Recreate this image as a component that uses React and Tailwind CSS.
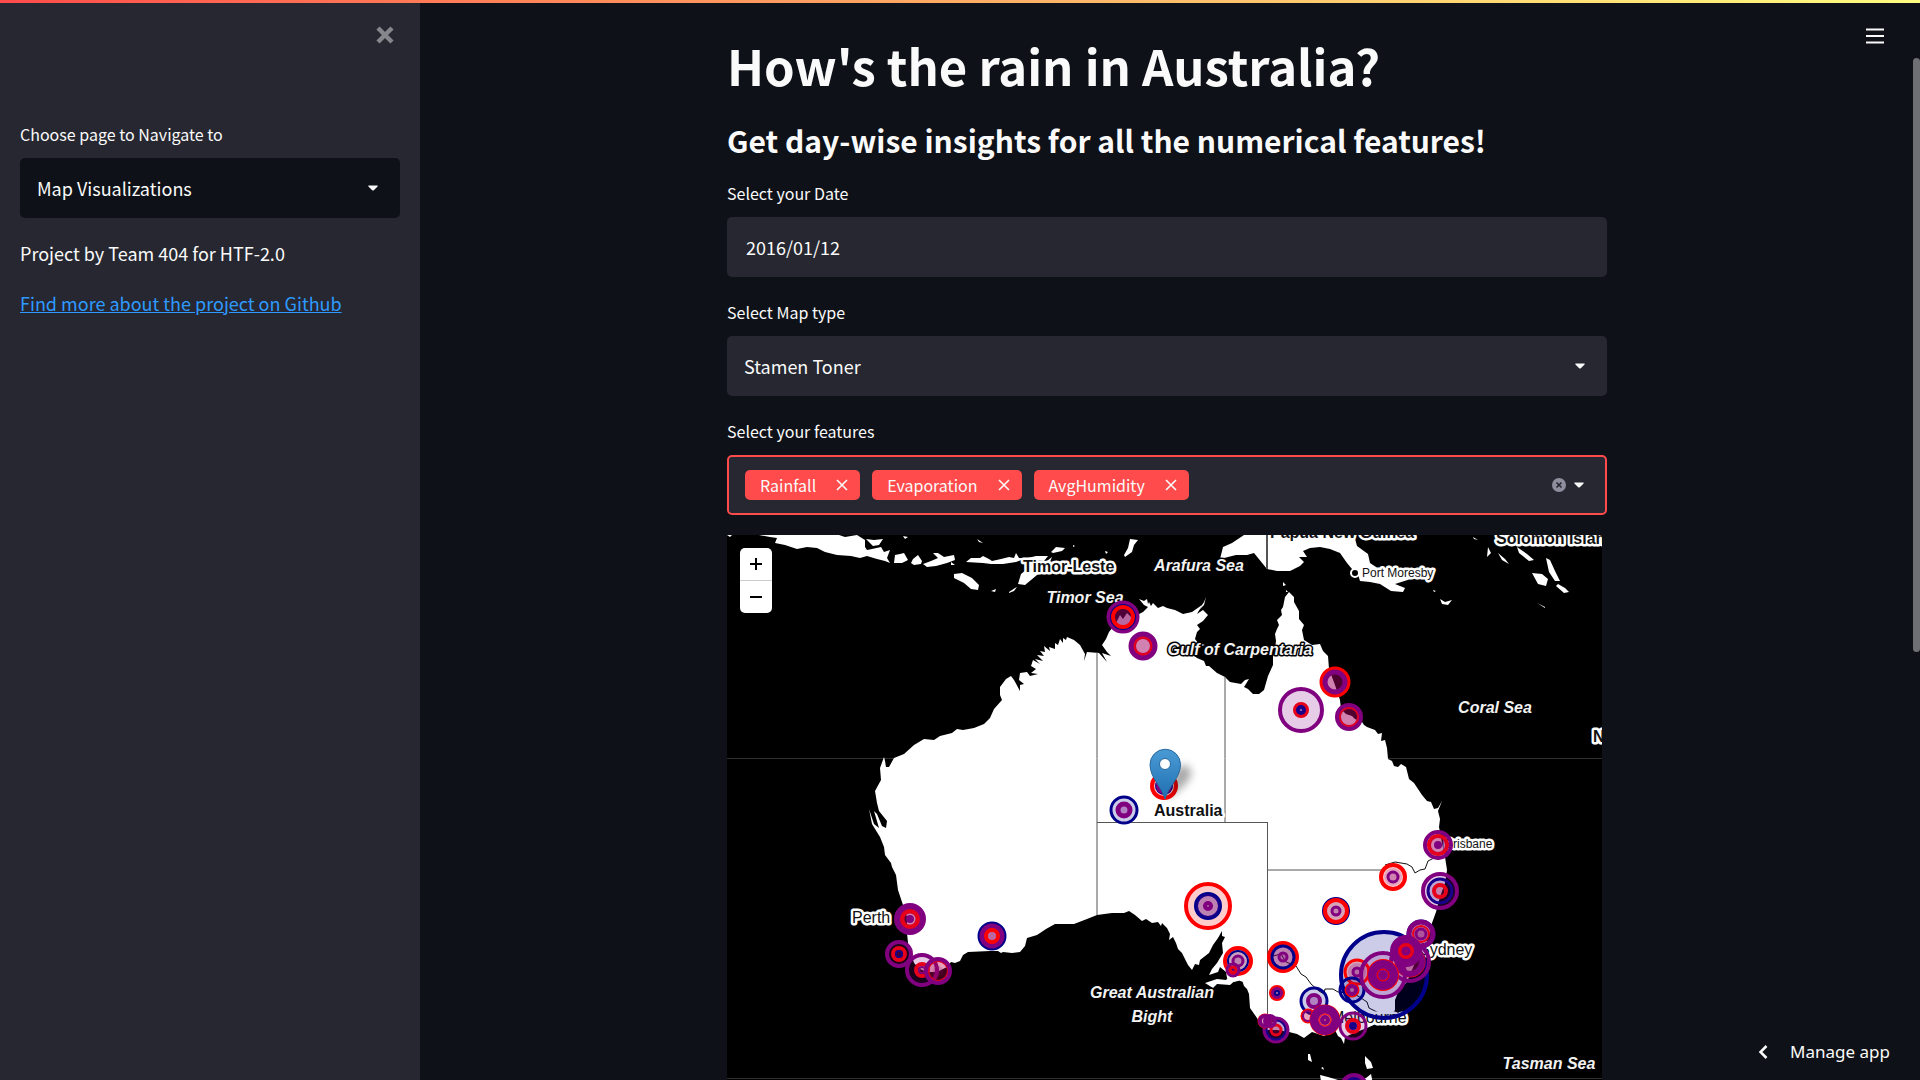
import { useState } from "react";

const PAGES = ["Map Visualizations", "Home", "Predictions"];
const MAP_TYPES = ["Stamen Toner", "Stamen Terrain", "OpenStreetMap"];

const COLORS = { n: "#00008b", r: "#ff0000", p: "#800080" };

// [x, y, [color, radius, strokeWidth?], ...]
const STATIONS = [
  [396, 82, ["p", 14, 5], ["n", 12, 2], ["r", 10], ["p", 8, 0]],
  [416, 111, ["r", 9], ["p", 12, 5], ["p", 8, 0]],
  [608, 147, ["r", 13, 5], ["p", 10, 5], ["p", 8, 0]],
  [574, 175, ["r", 6], ["n", 3], ["p", 21]],
  [622, 182, ["r", 10], ["p", 12], ["p", 9, 0]],
  [437, 251, ["r", 12], ["n", 7], ["p", 6]],
  [397, 275, ["n", 13, 3], ["p", 6, 5], ["p", 6, 0]],
  [183, 384, ["r", 8, 5], ["p", 13, 6], ["p", 2], ["p", 6, 0]],
  [172, 419, ["r", 6], ["n", 3, 2], ["p", 12]],
  [195, 435, ["r", 6], ["p", 3, 2], ["p", 15]],
  [211, 436, ["r", 10, 2], ["p", 5, 0], ["p", 12]],
  [265, 401, ["n", 13, 3], ["p", 10, 5], ["r", 6], ["p", 4, 0]],
  [481, 371, ["r", 22], ["n", 12], ["p", 12, 0], ["p", 3]],
  [511, 426, ["r", 13], ["n", 10, 2], ["p", 5, 3]],
  [506, 435, ["r", 3, 3], ["p", 6, 3]],
  [556, 422, ["r", 14], ["n", 11, 3], ["p", 10, 0], ["p", 4, 3]],
  [550, 458, ["r", 6], ["p", 4], ["n", 2, 2]],
  [609, 376, ["n", 13, 2], ["r", 11], ["p", 4, 3]],
  [666, 342, ["r", 12], ["p", 5, 3], ["p", 9, 0]],
  [711, 310, ["r", 9], ["p", 13], ["p", 2], ["p", 8, 0]],
  [713, 356, ["n", 12, 3], ["r", 6], ["p", 17]],
  [657, 440, ["n", 43]],
  [630, 437, ["r", 12, 3], ["p", 4, 3], ["p", 9, 0]],
  [625, 455, ["n", 12, 3], ["r", 6, 3], ["p", 4]],
  [694, 399, ["n", 13, 3], ["p", 12, 5], ["r", 8, 2], ["p", 5, 3], ["p", 9, 0]],
  [683, 427, ["p", 19], ["r", 14, 3], ["p", 12, 6]],
  [679, 416, ["p", 13, 6], ["p", 9, 4], ["r", 7, 0], ["r", 6, 4], ["p", 9, 0], ["p", 3, 3]],
  [656, 440, ["p", 22], ["r", 15, 2], ["p", 12, 6], ["p", 7, 6], ["r", 6, 1], ["p", 2]],
  [587, 466, ["n", 13, 3], ["p", 6], ["p", 4, 0]],
  [581, 481, ["r", 6, 3], ["p", 5, 2]],
  [598, 485, ["r", 14, 3], ["p", 12, 6], ["p", 8, 3], ["r", 6, 1], ["p", 3]],
  [626, 491, ["r", 6], ["n", 2], ["p", 13, 3]],
  [549, 495, ["n", 10, 3], ["r", 5, 3], ["p", 12, 3]],
  [538, 486, ["r", 6, 3], ["p", 5]],
  [543, 486, ["p", 5, 4]],
  [627, 552, ["n", 9], ["p", 12]],
];

const AUSTRALIA =
  "M360 117L357 126 358 119 353 110 347 105 340 102 339 105 336 103 336 108 333 104 331 110 328 108 328 114 322 112 323 116 317 111 318 117 313 116 317 121 310 120 316 126 308 124 313 129 306 125 304 131 309 134 304 138 311 139 303 141 300 137 293 138 292 145 297 149 293 150 293 156 287 145 284 141 279 144 273 152 273 160 275 165 267 174 263 183 257 189 247 193 236 195 230 194 225 198 213 201 207 205 197 204 187 210 177 219 167 223 162 232 159 232 158 226 157 222 153 233 154 245 148 256 150 268 152 276 160 286 159 293 155 291 150 279 147 276 152 293 147 289 142 274 145 289 153 302 157 312 158 320 164 328 165 332 169 340 171 355 175 367 180 382 180 398 181 408 184 418 187 428 193 434 200 437 210 437 220 432 224 427 228 428 233 426 236 420 241 417 263 416 271 416 274 418 276 417 285 418 293 417 298 411 300 403 310 400 319 394 328 389 347 389 360 384 370 380 385 378 397 378 402 376 408 380 415 386 419 384 425 388 431 387 434 391 435 388 440 393 443 399 442 405 446 402 449 408 451 414 455 418 461 430 465 435 468 429 472 430 473 425 482 418 486 410 491 403 495 396 495 401 498 402 495 408 496 418 490 428 485 434 482 440 491 437 493 432 499 437 500 443 507 447 515 445 517 451 520 454 522 459 523 473 530 483 537 495 550 495 562 497 570 499 577 503 585 497 597 501 608 495 611 501 614 503 617 509 618 502 627 498 640 493 653 487 663 482 668 475 668 465 672 455 680 447 685 435 692 418 703 398 705 388 709 377 713 362 718 348 720 335 718 322 715 308 712 292 713 284 711 276 715 266 711 273 707 274 704 267 700 266 695 260 687 248 682 244 680 236 679 232 674 229 671 232 667 231 665 226 661 224 660 213 658 205 654 206 655 198 651 199 648 195 640 192 637 190 635 187 628 184 625 181 619 179 614 174 613 165 608 150 602 134 601 121 596 116 593 109 585 110 577 105 575 95 577 90 572 84 572 76 567 67 567 62 562 57 558 62 556 72 554 75 555 80 550 85 552 90 550 94 548 99 549 106 548 113 546 122 546 130 541 141 537 155 532 159 526 159 521 154 517 152 522 144 518 145 514 149 503 147 498 142 490 138 482 131 479 131 477 126 470 123 459 114 470 112 478 110 471 108 468 104 470 97 473 94 470 90 476 86 481 80 476 75 470 79 475 70 465 77 456 79 448 75 440 73 436 71 431 73 426 68 424 71 422 67 421 69 420 64 417 66 412 64 417 70 421 72 416 77 410 80 407 76 404 82 400 78 396 84 393 80 389 88 382 97 379 104 375 110 380 117 384 121 375 118 380 127 372 118z";

const ISLANDS = [
  "M32 0L43 2 50 3 48 8 58 10 70 14 80 12 90 13 98 17 110 20 124 21 133 23 140 21 150 24 158 26 163 28 160 23 163 15 157 17 154 12 145 14 140 15 138 12 138 5 130 0 118 2 112 0z",
  "M139 4l8 1 9-1-4 6-6 1zM168 20l5-1 4-1 4 7-6 3-8 0zM186 24l5-4 4 6-1 3-7 1-3-2zM196 29l8-3 7-3-5-5 5 0 6 4 10-2 1 5-8 3-11 3-9 1zM224 27l4 3-4 0zM239 27l5-4 9 0 3-2 6 3 3 2 9-2 8-2 5 1 2-5 3 5 9 0 8-2 12 0-4 5-20-2-8 3-13 2-12 0-8-1z",
  "M227 39l8-1 10 5 7 7-1 5-7-1-7-6-10-5zM264 56l5-2-1 3zM282 57l6-4 2-1-3 4-5 2zM291 49l3-10 10-8 16-5 5-4-5 12-10 6-6 5-6 5zM324 17l5-5 9 1-3 3-9 2zM346 10l2 1-2 1zM378 16l3 1-2 2zM397 20l4-7 2-9 8 1-4 5-2 7-7 5zM380 42h1zM250 4l6 4-4-1zM176 1l5 1-3 2z",
  "M0 0l5 0-2 2z",
  "M517 0L505 8 496 12 493 24 509 20 520 20 527 18 540 34 550 36 563 36 573 31 577 27 572 22 580 22 576 16 583 13 593 12 603 14 613 18 620 28 625 34 630 36 633 46 643 47 653 49 664 56 676 57 678 53 668 49 690 42 664 38 652 34 643 28 641 19 630 11 627 0z",
  "M556 47l3 3-3 1zM559 55l2 2-2 0zM706 55l3 1-2 1zM713 64l5 3 7-2-4 5-6-1zM727 66h2zM746 2l5 3-4-1zM761 12l3 6-4 4zM771 18l7 6 4 5-7-4zM790 12l10 7 7 6-5 1-10-8zM819 23l4 2 5 11 5 10-5 0-6-9zM805 38l10 1 6 5-2 7-8-2zM831 49l7 4 4 4-5 1-8-7zM810 68l8 4 0 1zM683 26l1 4z",
  "M477 67l2-5-2 8-6 6zM478 448l12-4 9 1 4-5 8 3-8 7-13-1-4 4zM511 443l5-2 1 6-4-1zM581 519l2 0 2 8-4-2zM638 521l6 6 2 6-6 1-2-6zM594 533l2-1 1 3zM593 540l8 2 10 3 14 1 14-3 5-4 3 15-6 22-14 16-17-3-11-21-4-16z",
];

const CITY_LABELS = [
  { x: 296, y: 37, size: 16, text: "Timor-Leste", bold: true },
  { x: 543, y: 3, size: 16, text: "Papua New Guinea", bold: true },
  { x: 769, y: 9, size: 16, text: "Solomon Islands", bold: true },
  { x: 427, y: 281, size: 16, text: "Australia", bold: true },
  { x: 866, y: 207, size: 16, text: "New Caledonia", bold: true },
  { x: 635, y: 42, size: 12, text: "Port Moresby" },
  { x: 125, y: 388, size: 16, text: "Perth" },
  { x: 718, y: 313, size: 12, text: "Brisbane" },
  { x: 692, y: 420, size: 16, text: "Sydney" },
  { x: 604, y: 488, size: 16, text: "Melbourne" },
];

const SEA_LABELS = [
  { x: 358, y: 68, text: "Timor Sea" },
  { x: 472, y: 36, text: "Arafura Sea" },
  { x: 513, y: 120, text: "Gulf of Carpentaria" },
  { x: 768, y: 178, text: "Coral Sea" },
  { x: 425, y: 463, text: "Great Australian" },
  { x: 425, y: 487, text: "Bight" },
  { x: 822, y: 534, text: "Tasman  Sea" },
];

function Caret() {
  return (
    <svg width="10" height="6" viewBox="0 0 10 6" className="fill-[#fafafa]" aria-hidden="true">
      <path d="M0.4 0.6h9.2v.8L5.8 5.2q-.8.6-1.6 0L.4 1.400z" />
    </svg>
  );
}

function SelectBox({ id, label, options, value, onChange, bg }) {
  return (
    <div>
      <label htmlFor={id} className="block mb-[9px] text-[16px] leading-[30px]">{label}</label>
      <div className="relative">
        <select
          id={id}
          value={value}
          onChange={(e) => onChange(e.target.value)}
          className={`block w-full h-[60px] pl-[17px] pr-12 rounded-[5px] appearance-none text-[18px] outline-none ${bg}`}
        >
          {options.map((o) => <option key={o}>{o}</option>)}
        </select>
        <span className="absolute inset-y-0 right-[22px] flex items-center pointer-events-none">
          <Caret />
        </span>
      </div>
    </div>
  );
}

function Tag({ name, onRemove }) {
  return (
    <span className="flex items-center h-[30px] pl-[15px] pr-3 gap-5 rounded-[5px] bg-[#ff4b4b] text-[16px]">
      {name}
      <button onClick={() => onRemove(name)} aria-label={`Remove ${name}`}>
        <svg width="12" height="12" viewBox="0 0 12 12" className="stroke-[#fafafa]" strokeWidth="1.600" fill="none">
          <path d="M1 1l10 10M11 1L1 11" />
        </svg>
      </button>
    </span>
  );
}

function RainMap() {
  return (
    <div className="relative w-full max-w-[875px] bg-black">
      <svg viewBox="0 0 875 625" className="block w-full" role="img" aria-label="Map of Australia">
        <defs>
          <linearGradient id="pin" x1="0" y1="0" x2="0" y2="1">
            <stop offset="0" stopColor="#4a9bd4" />
            <stop offset="1" stopColor="#1f6fb2" />
          </linearGradient>
          <filter id="soft" x="-50%" y="-50%" width="200%" height="200%">
            <feGaussianBlur stdDeviation="4" />
          </filter>
        </defs>
        <rect width="875" height="625" fill="#000" />
        <path d={AUSTRALIA} fill="#fff" />
        {ISLANDS.map((d, i) => <path key={i} d={d} fill="#fff" />)}

        {/* state borders */}
        <g fill="none" stroke="#555" strokeWidth="1">
          <path d="M370 117V380M370 287.500H541M498 142V287" />
          <path d="M540.500 287V492M541 335H658" />
          <path d="M540 0V34" strokeWidth="2" />
        </g>
        <g fill="none" stroke="#111" strokeWidth="1">
          <path d="M658 330l10-3 12 2 5 3 3 6 5-3 5-1 3-8 6-3 6 1" />
          <path d="M546 421l8-2 5 8 10 4 5 8 5 3 5 7 8 7 5 3 1-5h8l5 3 10 1 10 3 9 6 2 6 22 11" />
        </g>
        {/* tile seams */}
        <path d="M0 223.500H875M0 543.500H875" stroke="#fff" strokeOpacity=".18" />

        <g fontFamily="'Liberation Sans', Arial, sans-serif" strokeLinejoin="round" paintOrder="stroke">
          {CITY_LABELS.map((l) => (
            <text
              key={l.text}
              x={l.x}
              y={l.y}
              fontSize={l.size}
              fontWeight={l.bold ? 700 : 400}
              fill="#111"
              stroke="#fff"
              strokeWidth="5"
            >
              {l.text}
            </text>
          ))}
          {SEA_LABELS.map((l) => (
            <text
              key={l.text}
              x={l.x}
              y={l.y}
              fontSize="16"
              fontWeight="700"
              fontStyle="italic"
              fill="#f2f2f2"
              stroke="#000"
              strokeWidth="3"
              textAnchor="middle"
            >
              {l.text}
            </text>
          ))}
        </g>
        <circle cx="628" cy="38" r="4" fill="#000" stroke="#fff" strokeWidth="2" />

        {STATIONS.map(([x, y, ...rings], i) => (
          <g key={i}>
            {rings.map(([c, r, w = 4], j) => (
              <circle
                key={j}
                cx={x}
                cy={y}
                r={r}
                fill={COLORS[c]}
                fillOpacity=".2"
                stroke={COLORS[c]}
                strokeWidth={w}
              />
            ))}
          </g>
        ))}

        {/* leaflet pin */}
        <path d="M440 262L448 236Q458 224 464 236Q466 246 440 264z" fill="#000" opacity=".35" filter="url(#soft)" />
        <path
          d="M438 264C435 252 423 243 423 229.500A15 15 0 0 1 453.500 229.500C453.500 243 441 252 438 264z"
          fill="url(#pin)"
          stroke="#2669a0"
          strokeWidth="1"
        />
        <circle cx="438" cy="229" r="5.500" fill="#fff" stroke="#2669a0" />
      </svg>

      <div className="absolute top-[13px] left-[13px] flex flex-col w-8 h-[65px] rounded-[5px] overflow-hidden bg-white text-black">
        <button className="flex-1 flex items-center justify-center border-b border-[#ccc]" aria-label="Zoom in">
          <svg width="14" height="14" viewBox="0 0 14 14" stroke="#000" strokeWidth="2"><path d="M1 7h12M7 1v12" /></svg>
        </button>
        <button className="flex-1 flex items-center justify-center" aria-label="Zoom out">
          <svg width="14" height="14" viewBox="0 0 14 14" stroke="#000" strokeWidth="2"><path d="M1 7h12" /></svg>
        </button>
      </div>
    </div>
  );
}

function App() {
  const [page, setPage] = useState("Map Visualizations");
  const [date, setDate] = useState("2016/01/12");
  const [mapType, setMapType] = useState("Stamen Toner");
  const [features, setFeatures] = useState(["Rainfall", "Evaporation", "AvgHumidity"]);

  const removeFeature = (name) => setFeatures((prev) => prev.filter((f) => f !== name));

  return (
    <div className="relative flex h-screen overflow-hidden bg-[#0e1117] text-[#fafafa] font-['Noto_Sans_CJK_SC',sans-serif]">
      <div className="absolute inset-x-0 top-0 z-10 h-[3px] bg-linear-to-r from-[#ff4b4b] to-[#fffd80]" />

      {/* Sidebar */}
      <aside className="w-[420px] shrink-0 px-5 bg-[#262730]">
        <div className="flex justify-end h-[119px] pt-[26px] pr-[6px]">
          <button className="h-[18px]" aria-label="Close sidebar">
            <svg width="18" height="18" viewBox="0 0 18 18" stroke="#86868c" strokeWidth="4.500" fill="none">
              <path d="M2 2l14 14M16 2L2 16" />
            </svg>
          </button>
        </div>
        <SelectBox id="page" label="Choose page to Navigate to" options={PAGES} value={page} onChange={setPage} bg="bg-[#0e1117]" />
        <p className="mt-5 text-[18px] leading-[30px]">Project by Team 404 for HTF-2.0</p>
        <p className="mt-5 text-[18px] leading-[30px]">
          <a href="#github" className="text-[#2e9aff] underline">Find more about the project on Github</a>
        </p>
      </aside>

      {/* Main */}
      <main className="flex-1 min-w-0 pr-[6px] overflow-hidden">
        <div className="w-full max-w-[880px] mx-auto pt-[30px]">
          <h1 className="text-[49px] leading-[70px] font-bold">How's the rain in Australia?</h1>
          <h2 className="mt-4 text-[30px] leading-[48px] font-bold">Get day-wise insights for all the numerical features!</h2>

          <div className="flex flex-col gap-5 mt-[14px]">
            <div>
              <label htmlFor="date" className="block mb-[9px] text-[16px] leading-[30px]">Select your Date</label>
              <input
                id="date"
                type="text"
                value={date}
                onChange={(e) => setDate(e.target.value)}
                className="block w-full h-[60px] px-[19px] rounded-[5px] bg-[#262730] text-[18px] outline-none"
              />
            </div>

            <SelectBox id="map-type" label="Select Map type" options={MAP_TYPES} value={mapType} onChange={setMapType} bg="bg-[#262730]" />

            <div>
              <label htmlFor="features" className="block mb-[9px] text-[16px] leading-[30px]">Select your features</label>
              <div className="flex items-center gap-3 h-[60px] pl-4 pr-[21px] rounded-[5px] border-2 border-[#ff4b4b] bg-[#262730]">
                {features.map((f) => <Tag key={f} name={f} onRemove={removeFeature} />)}
                <input id="features" type="text" className="flex-1 min-w-0 bg-transparent outline-none" />
                <div className="flex items-center gap-2">
                  <button onClick={() => setFeatures([])} aria-label="Clear all">
                    <svg width="14" height="14" viewBox="0 0 14 14">
                      <circle cx="7" cy="7" r="7" fill="#8d8f9e" />
                      <path d="M4.500 4.500l5 5M9.500 4.500l-5 5" stroke="#262730" strokeWidth="1.600" />
                    </svg>
                  </button>
                  <Caret />
                </div>
              </div>
            </div>

            <RainMap />
          </div>
        </div>
      </main>

      {/* page scrollbar */}
      <div className="absolute right-0 top-[58px] w-[7px] h-[55%] rounded-full bg-[#6e7074]" />

      <button className="absolute top-7 right-9" aria-label="Menu">
        <svg width="18" height="16" viewBox="0 0 18 16" stroke="#fafafa" strokeWidth="2">
          <path d="M0 1.500h18M0 8h18M0 14.500h18" />
        </svg>
      </button>

      <button className="absolute right-[30px] bottom-[14px] flex items-center gap-[22px] text-[17px] leading-7 font-['Noto_Sans',sans-serif]">
        <svg width="10" height="14" viewBox="0 0 10 14" stroke="#fafafa" strokeWidth="2.500" fill="none">
          <path d="M8.500 1L2.500 7l6 6" />
        </svg>
        Manage app
      </button>
    </div>
  );
}

export default App;
